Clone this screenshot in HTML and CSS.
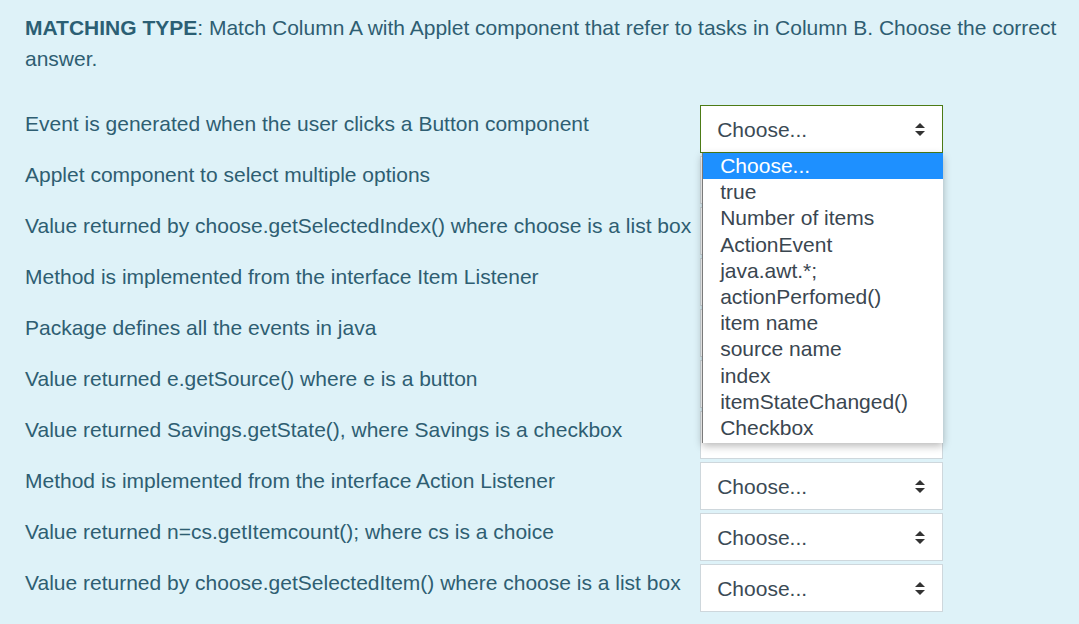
FILE: index.html
```html
<!DOCTYPE html>
<html>
<head>
<meta charset="utf-8">
<title>Matching type</title>
<link rel="stylesheet" href="styles.css">
</head>
<body>
<div id="question">

<p class="qtext"><strong>MATCHING TYPE</strong>: Match Column A with Applet component that refer to tasks in Column B. Choose the correct answer.</p>

<div class="answer">
  <div class="label">Event is generated when the user clicks a Button component</div>
  <div class="control">
    <div class="select focused">Choose...<span class="arrows"></span></div>
    <ul class="listbox">
      <li class="picked">Choose...</li>
      <li>true</li>
      <li>Number of items</li>
      <li>ActionEvent</li>
      <li>java.awt.*;</li>
      <li>actionPerfomed()</li>
      <li>item name</li>
      <li>source name</li>
      <li>index</li>
      <li>itemStateChanged()</li>
      <li>Checkbox</li>
    </ul>
  </div>

  <div class="label">Applet component to select multiple options</div>
  <div class="control"><div class="select">Choose...<span class="arrows"></span></div></div>

  <div class="label">Value returned by choose.getSelectedIndex() where choose is a list box</div>
  <div class="control"><div class="select">Choose...<span class="arrows"></span></div></div>

  <div class="label">Method is implemented from the interface Item Listener</div>
  <div class="control"><div class="select">Choose...<span class="arrows"></span></div></div>

  <div class="label">Package defines all the events in java</div>
  <div class="control"><div class="select">Choose...<span class="arrows"></span></div></div>

  <div class="label">Value returned e.getSource() where e is a button</div>
  <div class="control"><div class="select">Choose...<span class="arrows"></span></div></div>

  <div class="label">Value returned Savings.getState(), where Savings is a checkbox</div>
  <div class="control"><div class="select">Choose...<span class="arrows"></span></div></div>

  <div class="label">Method is implemented from the interface Action Listener</div>
  <div class="control"><div class="select">Choose...<span class="arrows"></span></div></div>

  <div class="label">Value returned n=cs.getItemcount(); where cs is a choice</div>
  <div class="control"><div class="select">Choose...<span class="arrows"></span></div></div>

  <div class="label">Value returned by choose.getSelectedItem() where choose is a list box</div>
  <div class="control"><div class="select">Choose...<span class="arrows"></span></div></div>
</div>

</div><!--question end-->
</body>
</html>
```

FILE: styles.css
```css
html, body{
	margin:0;
	padding:0;
	background-color:#def2f8;
}
#question{
	padding:12px 20px 0 25px;
	color:#2e5e72;
	font-family:"Liberation Sans", Arial, sans-serif;
	font-size:21px;
	line-height:31px;
}
.qtext{
	margin:0 0 31px 0;
}
.qtext strong{
	color:#2b5f74;
}
.answer{
	display:grid;
	grid-template-columns:auto 243px;
	column-gap:9px;
	row-gap:3px;
	justify-content:start;
}
.label{
	padding-top:3px;
	white-space:nowrap;
}
.control{
	position:relative;
}
.select{
	box-sizing:border-box;
	height:48px;
	background-color:#fff;
	border:1px solid #ced7dc;
	padding:0 0 0 16px;
	display:flex;
	align-items:center;
	justify-content:space-between;
	color:#3b4a55;
}
.select.focused{
	border-color:#4c7b16;
}
.arrows{
	display:block;
	width:10px;
	height:13px;
	margin-right:17px;
	position:relative;
}
.arrows:before, .arrows:after{
	content:"";
	position:absolute;
	left:0;
	border-left:5px solid transparent;
	border-right:5px solid transparent;
}
.arrows:before{
	top:0;
	border-bottom:5.5px solid #333;
}
.arrows:after{
	bottom:0;
	border-top:5.5px solid #333;
}
.listbox{
	position:absolute;
	top:48px;
	left:2px;
	right:0;
	margin:0;
	padding:0 0 2px 0;
	list-style:none;
	background-color:#fff;
	border-left:1px solid #7a7a7a;
	box-shadow:0 3px 8px rgba(0,0,0,0.28);
	z-index:2;
	font-size:21px;
	line-height:26.2px;
	color:#3a4650;
}
.listbox li{
	padding-left:17px;
	white-space:nowrap;
}
.listbox li.picked{
	background-color:#1e90ff;
	color:#fff;
}
```
